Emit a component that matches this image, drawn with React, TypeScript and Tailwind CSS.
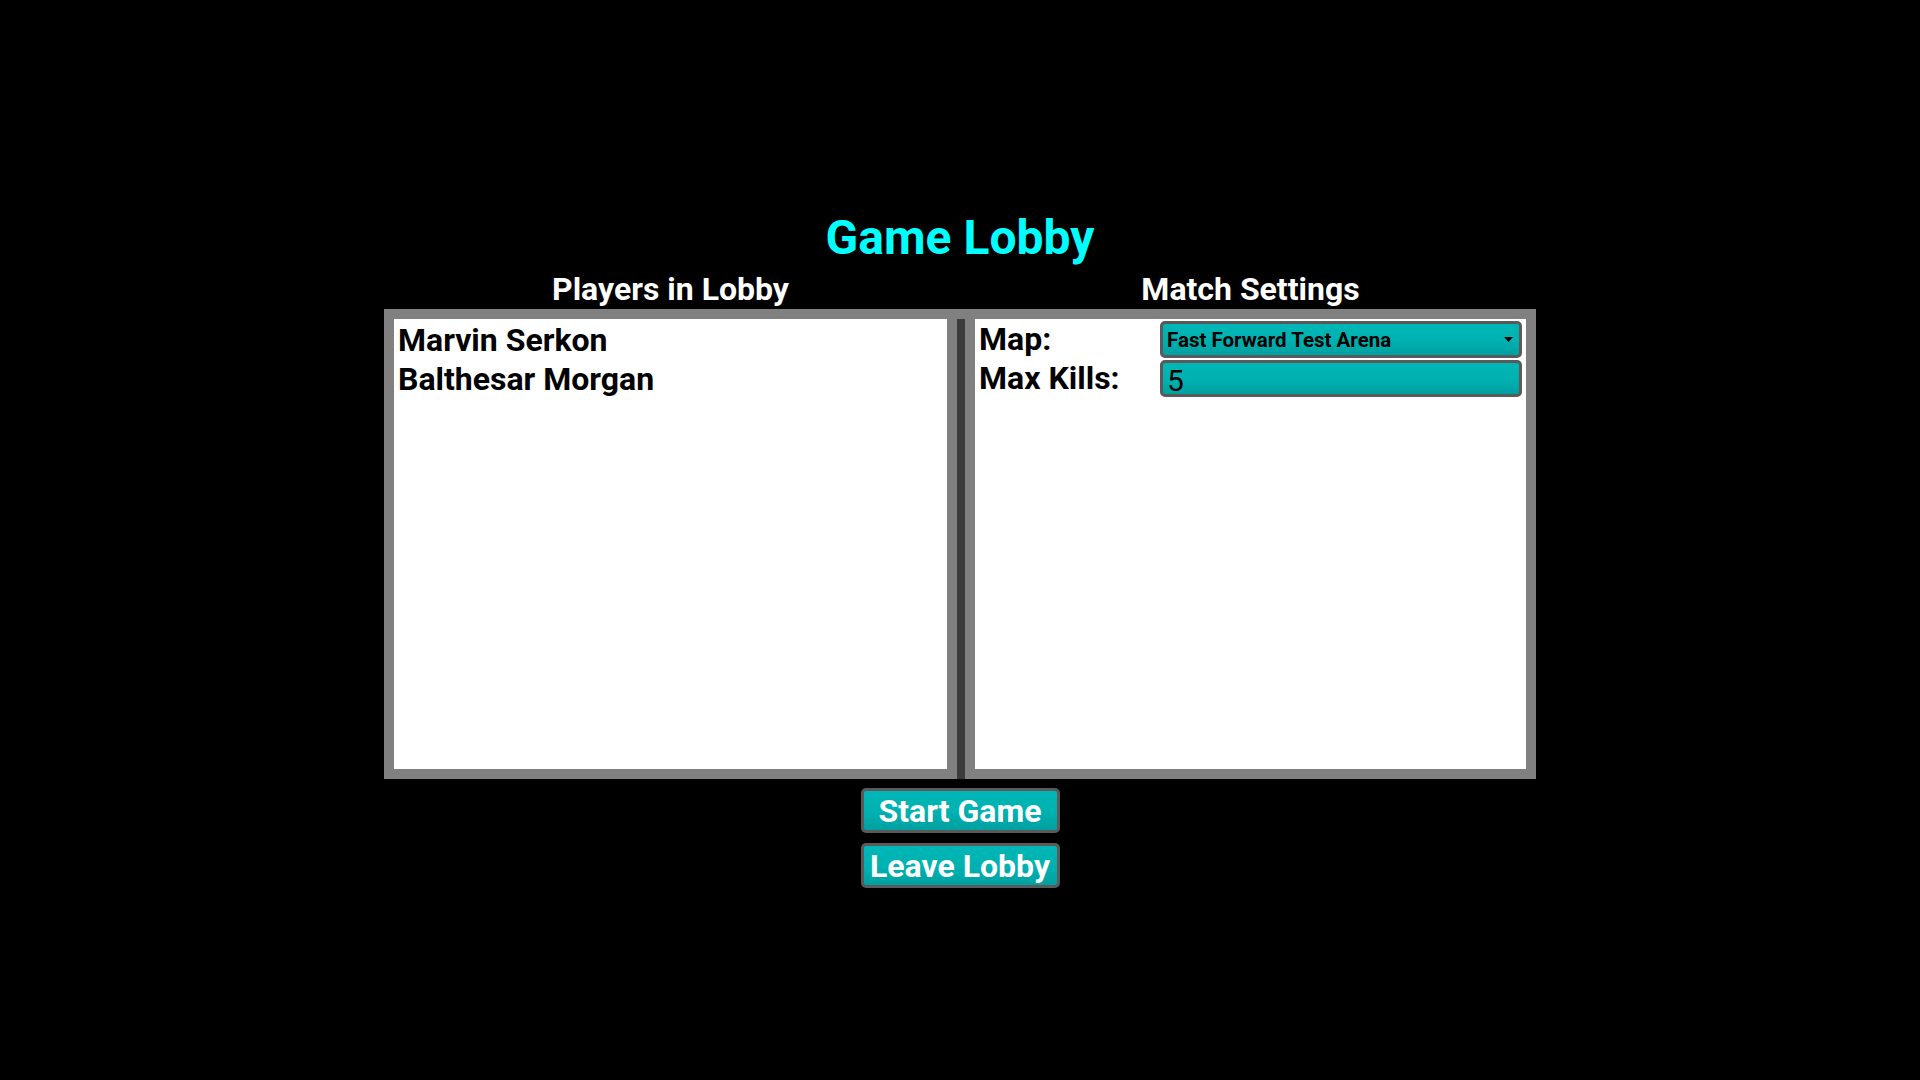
import React from "react";

const players = ["Marvin Serkon", "Balthesar Morgan"];

function TealButton({ label }: { label: string }) {
  return (
    <button className="w-[199px] h-[45px] rounded-[5px] border-[3px] border-[#5a5a5a] bg-linear-to-b from-[#00b6b6] via-[#00b2b2] to-[#00a0a0] text-white font-bold text-[32px] leading-[38px] text-center whitespace-nowrap">
      {label}
    </button>
  );
}

export default function App() {
  return (
    <div className="min-h-screen w-full bg-black flex flex-col items-center pt-[211px] font-['Roboto',sans-serif]">
      <h1 className="text-[48px] leading-[54px] font-bold text-[#00ffff]">Game Lobby</h1>

      <div className="mt-[6px] flex w-[1152px] text-white font-bold text-[32px] leading-[37px] text-center">
        <div className="w-[573px]">Players in Lobby</div>
        <div className="w-[8px]" />
        <div className="flex-1">Match Settings</div>
      </div>

      {/* panels */}
      <div className="mt-[1px] w-[1152px] h-[470px] bg-[#808080] pt-[10px] flex">
        <div className="w-[573px] px-[10px] pb-[10px] flex">
          <div className="flex-1 bg-white px-[4px] pt-[2px]">
            {players.map((p) => (
              <div key={p} className="text-black font-bold text-[32px] leading-[39px]">
                {p}
              </div>
            ))}
          </div>
        </div>
        <div className="w-[8px] bg-[#3c3c3c]" />
        <div className="flex-1 px-[10px] pb-[10px] flex">
          <div className="flex-1 bg-white pl-[4px] pr-[4px] pt-[2px]">
            <div className="grid grid-cols-[181px_1fr] gap-y-[2px] items-center">
              <div className="text-black font-bold text-[32px] leading-[37px]">Map:</div>
              <div className="h-[37px] rounded-[5px] border-[3px] border-[#5a5a5a] bg-linear-to-b from-[#00b6b6] via-[#00b2b2] to-[#00a0a0] flex items-center justify-between pl-[4px] pr-[6px]">
                <span className="text-black font-bold text-[20.5px] leading-[24px]">Fast Forward Test Arena</span>
                <svg width="9" height="5" viewBox="0 0 9 5">
                  <path d="M0 0 L9 0 L4.5 5 Z" fill="#000" />
                </svg>
              </div>
              <div className="text-black font-bold text-[32px] leading-[37px]">Max Kills:</div>
              <input
                readOnly
                value="5"
                className="h-[37px] w-full rounded-[5px] border-[3px] border-[#5a5a5a] bg-linear-to-b from-[#00b6b6] via-[#00b2b2] to-[#00a0a0] pl-[4px] pt-[3px] text-black text-[30px] leading-[27px] outline-none"
              />
            </div>
          </div>
        </div>
      </div>

      <div className="mt-[9px] flex flex-col items-center gap-[10px]">
        <TealButton label="Start Game" />
        <TealButton label="Leave Lobby" />
      </div>
    </div>
  );
}
